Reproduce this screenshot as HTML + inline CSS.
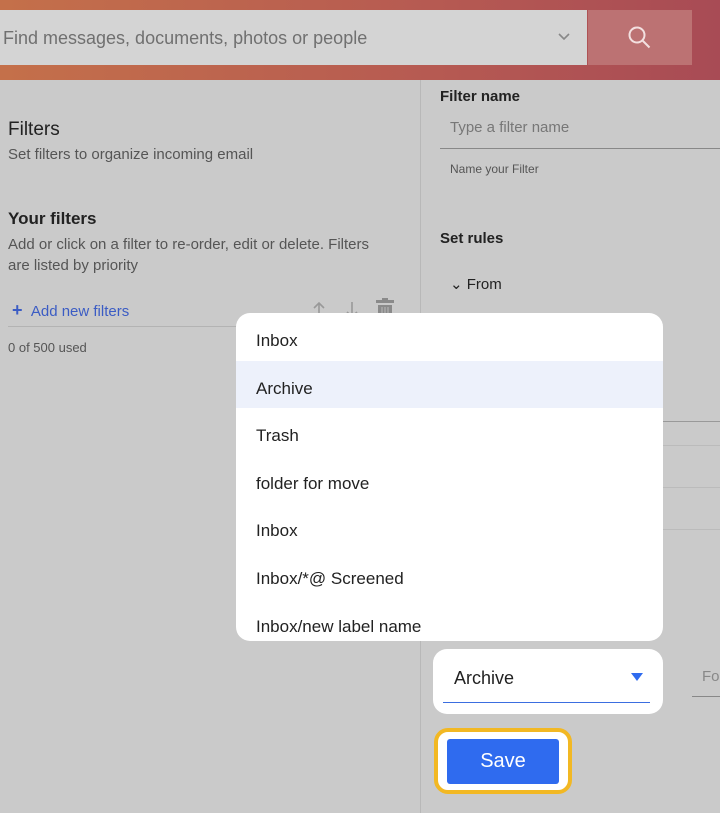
<!DOCTYPE html>
<html><head><style>
*{margin:0;padding:0;box-sizing:border-box}
body{width:720px;height:813px;overflow:hidden;background:#cacaca;font-family:"Liberation Sans",sans-serif;position:relative;color:#2a2a2a}
.hdr{position:absolute;left:0;top:0;width:720px;height:80px;background:linear-gradient(90deg,#c4704a,#b65a52 60%,#a84b55)}
.search{position:absolute;left:0;top:10px;width:587px;height:55px;background:#d4d4d4;font-size:18px;color:#707070;padding:18px 0 0 3px}
.sbtn{position:absolute;left:588px;top:10px;width:104px;height:55px;background:#bc7273}
.a{position:absolute;white-space:nowrap}
.vline{position:absolute;left:420px;top:80px;width:1px;height:733px;background:#b8b8b8}
.menu{position:absolute;left:236px;top:313px;width:427px;height:328px;background:#fff;border-radius:14px;overflow:hidden}
.menu div{height:47.6px;font-size:17px;color:#222;padding:19px 0 0 20px;line-height:1}
.sel{position:absolute;left:433px;top:649px;width:230px;height:65px;background:#fff;border-radius:14px}
.save{position:absolute;left:434px;top:728px;width:138px;height:66px;border:4px solid #f2b823;border-radius:14px;background:#fff}
.save div{position:absolute;left:9px;top:7px;width:112px;height:45px;background:#2f6bef;border-radius:3px;color:#fff;font-size:20px;text-align:center;line-height:45px}
</style></head><body>
<div class="hdr"></div>
<div class="search">Find messages, documents, photos or people</div>
<svg class="a" style="left:556px;top:30px" width="16" height="14"><path d="M3 4l5 5 5-5" stroke="#888" stroke-width="1.6" fill="none"/></svg>
<div class="sbtn"></div>
<svg class="a" style="left:627px;top:25px" width="26" height="26"><circle cx="10" cy="10" r="7.5" stroke="#f3e0e0" stroke-width="2" fill="none"/><path d="M15.5 15.5l7 7" stroke="#f3e0e0" stroke-width="2"/></svg>
<div class="vline"></div>
<div class="a" style="left:8px;top:119px;font-size:19px;color:#222">Filters</div>
<div class="a" style="left:8px;top:146px;font-size:15px;color:#555">Set filters to organize incoming email</div>
<div class="a" style="left:8px;top:209px;font-size:17px;font-weight:bold;color:#222">Your filters</div>
<div class="a" style="left:8px;top:234px;font-size:15px;color:#555;line-height:21px">Add or click on a filter to re-order, edit or delete. Filters<br>are listed by priority</div>
<div class="a" style="left:12px;top:300px;font-size:15px;color:#3b5cc4"><span style="font-size:18px;font-weight:bold">+</span>&nbsp;&nbsp;Add new filters</div>
<svg class="a" style="left:310px;top:300px" width="50" height="20"><path d="M9 3v15M4 8l5-5 5 5M42 2v15M37 12l5 5 5-5" stroke="#999" stroke-width="1.6" fill="none"/></svg>
<svg class="a" style="left:375px;top:298px" width="20" height="20"><rect x="1" y="2" width="18" height="3" fill="#8a8a8a"/><rect x="7" y="0" width="6" height="3" fill="#8a8a8a"/><rect x="3" y="7" width="14" height="12" fill="#8a8a8a"/><path d="M7 9v8M10 9v8M13 9v8" stroke="#bbb" stroke-width="1"/></svg>
<div class="a" style="left:8px;top:326px;width:250px;height:1px;background:#b3b3b3"></div>
<div class="a" style="left:8px;top:340px;font-size:13px;color:#555">0 of 500 used</div>
<div class="a" style="left:440px;top:88px;font-size:15px;font-weight:bold;color:#222">Filter name</div>
<div class="a" style="left:450px;top:119px;font-size:15px;color:#777">Type a filter name</div>
<div class="a" style="left:440px;top:148px;width:280px;height:1px;background:#888"></div>
<div class="a" style="left:450px;top:162px;font-size:12px;color:#555">Name your Filter</div>
<div class="a" style="left:440px;top:230px;font-size:15px;font-weight:bold;color:#222">Set rules</div>
<div class="a" style="left:450px;top:275px;font-size:15px;color:#222">⌄ From</div>
<div class="a" style="left:663px;top:421px;width:57px;height:1px;background:#999"></div>
<div class="a" style="left:663px;top:445px;width:57px;height:1px;background:#bbb"></div>
<div class="a" style="left:663px;top:487px;width:57px;height:1px;background:#bbb"></div>
<div class="a" style="left:663px;top:529px;width:57px;height:1px;background:#bbb"></div>
<div class="a" style="left:702px;top:668px;font-size:15px;color:#888">Fo</div>
<div class="a" style="left:692px;top:696px;width:28px;height:1px;background:#888"></div>
<div class="menu">
<div>Inbox</div><div style="background:#edf1fb">Archive</div><div>Trash</div><div>folder for move</div><div>Inbox</div><div>Inbox/*@ Screened</div><div>Inbox/new label name</div>
</div>
<div class="sel">
<div class="a" style="left:21px;top:19px;font-size:18px;color:#222">Archive</div>
<svg class="a" style="left:197px;top:23px" width="14" height="10"><path d="M1 1h12L7 9z" fill="#2f6bef"/></svg>
<div class="a" style="left:10px;top:53px;width:207px;height:1px;background:#3b6ee0"></div>
</div>
<div class="save"><div>Save</div></div>
</body></html>
